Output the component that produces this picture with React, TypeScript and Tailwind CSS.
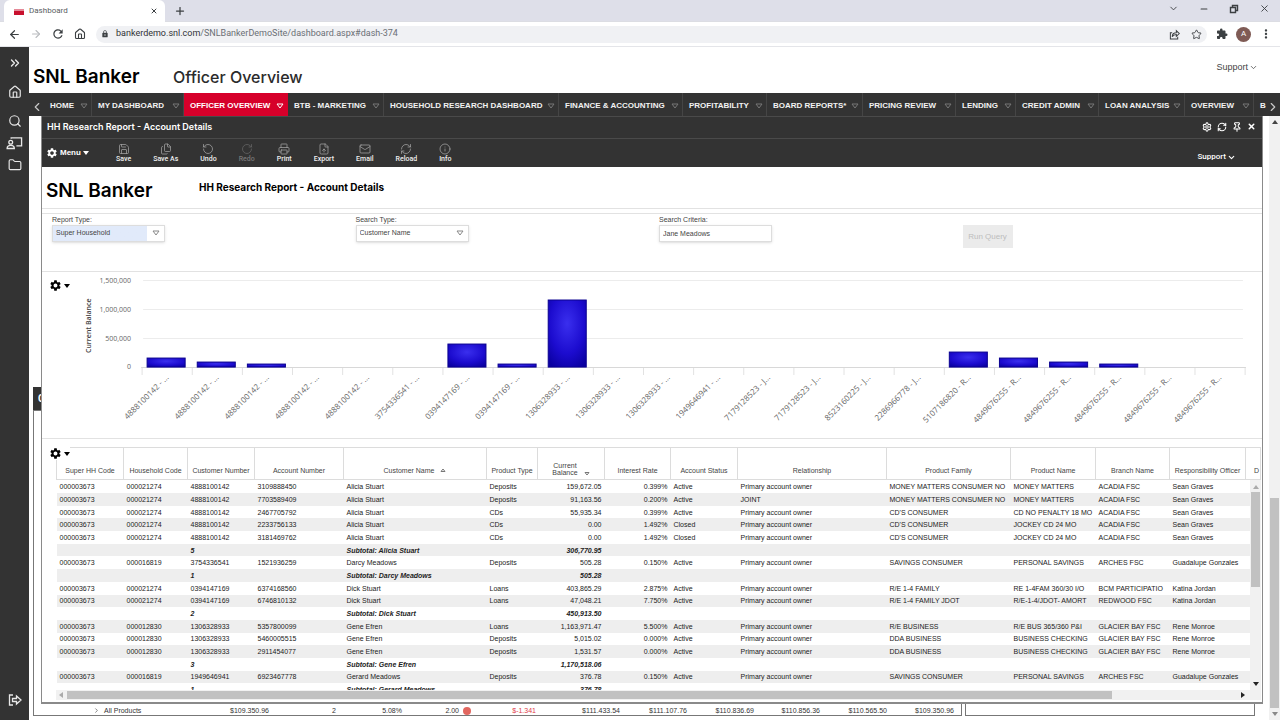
import React from "react";
import {
  ArrowLeft,
  ArrowRight,
  ChevronDown,
  ChevronLeft,
  ChevronRight,
  ChevronsRight,
  FileUp,
  Files,
  Folder,
  House,
  Info,
  Mail,
  Minus,
  Pin,
  Plus,
  Printer,
  RefreshCw,
  RotateCcw,
  RotateCw,
  Save,
  Search,
  Settings,
  Star,
  X,
} from "lucide-react";
import { MdExtension, MdLock, MdMoreVert, MdSettings, MdRefresh } from "react-icons/md";

const navItems = [
  { label: "HOME", width: "w-[48px]" },
  { label: "MY DASHBOARD", width: "w-[92px]" },
  { label: "OFFICER OVERVIEW", width: "w-[104px]", active: true },
  { label: "BTB - MARKETING", width: "w-[96px]" },
  { label: "HOUSEHOLD RESEARCH DASHBOARD", width: "w-[175px]" },
  { label: "FINANCE & ACCOUNTING", width: "w-[124px]" },
  { label: "PROFITABILITY", width: "w-[84px]" },
  { label: "BOARD REPORTS*", width: "w-[96px]" },
  { label: "PRICING REVIEW", width: "w-[93px]" },
  { label: "LENDING", width: "w-[60px]" },
  { label: "CREDIT ADMIN", width: "w-[83px]" },
  { label: "LOAN ANALYSIS", width: "w-[86px]" },
  { label: "OVERVIEW", width: "w-[69px]" },
];

const tools = [
  { label: "Save", Icon: Save },
  { label: "Save As", Icon: Files },
  { label: "Undo", Icon: RotateCcw },
  { label: "Redo", Icon: RotateCw, disabled: true },
  { label: "Print", Icon: Printer },
  { label: "Export", Icon: FileUp },
  { label: "Email", Icon: Mail },
  { label: "Reload", Icon: RefreshCw },
  { label: "Info", Icon: Info },
];

const bars: [string, number][] = [
  ["4888100142 - ...", 159672],
  ["4888100142 - ...", 91163],
  ["4888100142 - ...", 55935],
  ["4888100142 - ...", 0],
  ["4888100142 - ...", 0],
  ["3754336541 - ...", 0],
  ["0394147169 - ...", 403865],
  ["0394147169 - ...", 47048],
  ["1306328933 - ...", 1163971],
  ["1306328933 - ...", 0],
  ["1306328933 - ...", 0],
  ["1949646941 - ...", 0],
  ["7179128523 - J...", 0],
  ["7179128523 - J...", 0],
  ["8523160225 - J...", 0],
  ["2286966778 - J...", 0],
  ["5107186820 - R...", 257000],
  ["4849676255 - R...", 159672],
  ["4849676255 - R...", 91163],
  ["4849676255 - R...", 55935],
  ["4849676255 - R...", 0],
  ["4849676255 - R...", 0],
];

const columns = [
  { label: "Super HH Code", width: "w-[67px]" },
  { label: "Household Code", width: "w-[64px]" },
  { label: "Customer Number", width: "w-[67px]" },
  { label: "Account Number", width: "w-[89px]" },
  { label: "Customer Name", width: "w-[143px]", sort: "asc" },
  { label: "Product Type", width: "w-[51px]" },
  { label: "Current Balance", width: "w-[67px]", sort: "desc" },
  { label: "Interest Rate", width: "w-[66px]" },
  { label: "Account Status", width: "w-[67px]" },
  { label: "Relationship", width: "w-[149px]" },
  { label: "Product Family", width: "w-[124px]" },
  { label: "Product Name", width: "w-[85px]" },
  { label: "Branch Name", width: "w-[74px]" },
  { label: "Responsibility Officer", width: "w-[76px]" },
  { label: "D", width: "w-[15px]" },
];

const P = "Primary account owner";
const rows: string[][] = [
  ["000003673", "000021274", "4888100142", "3109888450", "Alicia Stuart", "Deposits", "159,672.05", "0.399%", "Active", P, "MONEY MATTERS CONSUMER NO", "MONEY MATTERS", "ACADIA FSC", "Sean Graves"],
  ["000003673", "000021274", "4888100142", "7703589409", "Alicia Stuart", "Deposits", "91,163.56", "0.200%", "Active", "JOINT", "MONEY MATTERS CONSUMER NO", "MONEY MATTERS", "ACADIA FSC", "Sean Graves"],
  ["000003673", "000021274", "4888100142", "2467705792", "Alicia Stuart", "CDs", "55,935.34", "0.399%", "Active", P, "CD'S CONSUMER", "CD NO PENALTY 18 MO", "ACADIA FSC", "Sean Graves"],
  ["000003673", "000021274", "4888100142", "2233756133", "Alicia Stuart", "CDs", "0.00", "1.492%", "Closed", P, "CD'S CONSUMER", "JOCKEY CD 24 MO", "ACADIA FSC", "Sean Graves"],
  ["000003673", "000021274", "4888100142", "3181469762", "Alicia Stuart", "CDs", "0.00", "1.492%", "Closed", P, "CD'S CONSUMER", "JOCKEY CD 24 MO", "ACADIA FSC", "Sean Graves"],
  ["", "", "5", "", "Subtotal: Alicia Stuart", "", "306,770.95", "", "", "", "", "", "", ""],
  ["000003673", "000016819", "3754336541", "1521936259", "Darcy Meadows", "Deposits", "505.28", "0.150%", "Active", P, "SAVINGS CONSUMER", "PERSONAL SAVINGS", "ARCHES FSC", "Guadalupe Gonzales"],
  ["", "", "1", "", "Subtotal: Darcy Meadows", "", "505.28", "", "", "", "", "", "", ""],
  ["000003673", "000021274", "0394147169", "6374168560", "Dick Stuart", "Loans", "403,865.29", "2.875%", "Active", P, "R/E 1-4 FAMILY", "RE 1-4FAM 360/30 I/O", "BCM PARTICIPATIO", "Katina Jordan"],
  ["000003673", "000021274", "0394147169", "6746810132", "Dick Stuart", "Loans", "47,048.21", "7.750%", "Active", P, "R/E 1-4 FAMILY JDOT", "R/E-1-4/JDOT- AMORT", "REDWOOD FSC", "Katina Jordan"],
  ["", "", "2", "", "Subtotal: Dick Stuart", "", "450,913.50", "", "", "", "", "", "", ""],
  ["000003673", "000012830", "1306328933", "5357800099", "Gene Efren", "Loans", "1,163,971.47", "5.500%", "Active", P, "R/E BUSINESS", "R/E BUS 365/360 P&I", "GLACIER BAY FSC", "Rene Monroe"],
  ["000003673", "000012830", "1306328933", "5460005515", "Gene Efren", "Deposits", "5,015.02", "0.000%", "Active", P, "DDA BUSINESS", "BUSINESS CHECKING", "GLACIER BAY FSC", "Rene Monroe"],
  ["000003673", "000012830", "1306328933", "2911454077", "Gene Efren", "Deposits", "1,531.57", "0.000%", "Active", P, "DDA BUSINESS", "BUSINESS CHECKING", "GLACIER BAY FSC", "Rene Monroe"],
  ["", "", "3", "", "Subtotal: Gene Efren", "", "1,170,518.06", "", "", "", "", "", "", ""],
  ["000003673", "000016819", "1949646941", "6923467778", "Gerard Meadows", "Deposits", "376.78", "0.150%", "Active", P, "SAVINGS CONSUMER", "PERSONAL SAVINGS", "ARCHES FSC", "Guadalupe Gonzales"],
  ["", "", "1", "", "Subtotal: Gerard Meadows", "", "376.78", "", "", "", "", "", "", ""],
];

function Caret({ className = "" }: { className?: string }) {
  return (
    <svg viewBox="0 0 8 6" className={`h-[6px] w-[8px] shrink-0 ${className}`} fill="none" stroke="currentColor" aria-hidden="true">
      <path d="M1 1h6L4 5z" />
    </svg>
  );
}

function Solid({ dir = "down", className = "" }: { dir?: "down" | "up" | "left" | "right"; className?: string }) {
  const d = {
    down: "M0 1h6L3 5z",
    up: "M0 5h6L3 1z",
    left: "M5 0v6L1 3z",
    right: "M1 0v6l4-3z",
  }[dir];
  return (
    <svg viewBox="0 0 6 6" className={`size-[6px] shrink-0 ${className}`} fill="currentColor" aria-hidden="true">
      <path d={d} />
    </svg>
  );
}

function SortMark({ dir }: { dir: string }) {
  return (
    <svg viewBox="0 0 6 5" className="h-[5px] w-[6px] shrink-0" fill="none" stroke="#777" strokeWidth="1" aria-hidden="true">
      <path d={dir === "asc" ? "M1 3.500h4L3 1z" : "M1 1.500h4L3 4z"} />
    </svg>
  );
}

function BrowserChrome() {
  return (
    <header className="shrink-0 text-[#3c4043]">
      <div className="flex h-[22px] items-center border-b border-[#dcdde3] bg-[#dedfe9] pl-1">
        <div className="flex h-[22px] w-[161px] items-center rounded-t-md bg-white pr-[7px] pl-[10px]">
          <svg viewBox="0 0 10 8" className="h-[8px] w-[10px]" aria-hidden="true">
            <path d="M0 2h10v6H0z" fill="#c8102e" />
            <path d="M0 2h10v2H0z" fill="#e58a98" />
          </svg>
          <span className="ml-[5px] flex-1 font-['Roboto',sans-serif] text-[8px] text-[#5a5d61]">Dashboard</span>
          <button type="button" aria-label="Close tab"><X size={8} strokeWidth={3} /></button>
        </div>
        <button type="button" aria-label="New tab" className="ml-[9px]"><Plus size={12} strokeWidth={2.5} /></button>
        <div className="ml-auto flex items-center gap-[20px] pr-[10px] pb-1">
          <button type="button" aria-label="Search tabs"><ChevronDown size={11} /></button>
          <button type="button" aria-label="Minimize"><Minus size={10} strokeWidth={2.5} /></button>
          <button type="button" aria-label="Restore">
            <svg viewBox="0 0 10 10" className="size-[10px]" fill="none" stroke="currentColor" strokeWidth="1.4" aria-hidden="true">
              <path d="M1.5 3.5h5v5h-5zM3.5 3.5v-2h5v5h-2" />
            </svg>
          </button>
          <button type="button" aria-label="Close window"><X size={11} strokeWidth={2} /></button>
        </div>
      </div>
      <div className="flex h-[25px] items-center border-b border-[#e4e5e9] bg-white pr-[7px] pl-[8px]">
        <nav className="flex w-[88px] items-center gap-[9px]" aria-label="Browser">
          <button type="button" aria-label="Back"><ArrowLeft size={13} strokeWidth={2.2} /></button>
          <button type="button" aria-label="Forward" className="text-[#babcc0]"><ArrowRight size={12} strokeWidth={2.2} /></button>
          <button type="button" aria-label="Reload page"><MdRefresh size={14} /></button>
          <button type="button" aria-label="Home page"><House size={12} strokeWidth={2.2} /></button>
        </nav>
        <div className="flex h-[17px] flex-1 items-center rounded-full bg-[#f0f1f4] pr-[5px] pl-[5px]">
          <MdLock size={8} />
          <span className="ml-[7px] flex-1 font-['Roboto',sans-serif] text-[9px] text-[#6b6f74]">
            <span className="text-[#303236]">bankerdemo.snl.com</span>/SNLBankerDemoSite/dashboard.aspx#dash-374
          </span>
          <svg viewBox="0 0 12 12" className="mr-[11px] size-[11px]" fill="none" stroke="currentColor" strokeWidth="1.1" aria-hidden="true">
            <path d="M3.500 4H1.500v7h8V8.500" />
            <path d="M3.500 8.500c0-3 1.600-4.500 4.500-4.500V1.800L11.200 5 8 8V6C6 6 4.500 6.600 3.500 8.500z" />
          </svg>
          <Star size={11} />
        </div>
        <MdExtension size={12} className="ml-[9px]" />
        <span className="mr-[8px] ml-[8px] flex size-[15px] items-center justify-center rounded-full bg-[#7f5b55] font-['Roboto',sans-serif] text-[8px] text-white">A</span>
        <MdMoreVert size={14} />
      </div>
    </header>
  );
}

function Sidebar() {
  return (
    <aside className="flex w-[29px] shrink-0 flex-col items-center bg-[#333] pt-[9px] text-[#e8e8e8]">
      <button type="button" aria-label="Expand" className="mb-[15px]"><ChevronsRight size={14} strokeWidth={2.4} /></button>
      <button type="button" aria-label="Home" className="mb-[15px]"><House size={14} strokeWidth={2} /></button>
      <button type="button" aria-label="Search" className="mb-[8px]"><Search size={14} strokeWidth={2} /></button>
      <button type="button" aria-label="Presentations" className="mb-[8px]">
        <svg viewBox="0 0 18 14" className="h-[14px] w-[17px]" fill="none" stroke="currentColor" strokeWidth="1.4" aria-hidden="true">
          <path d="M5.500 2.500v-1h11v8.500h-5.500" />
          <circle cx="5" cy="6.200" r="2" />
          <path d="M1.200 12.800c0-2.200 1.200-3.300 3.800-3.300s3.800 1.100 3.800 3.300z" />
        </svg>
      </button>
      <button type="button" aria-label="Folders"><Folder size={14} strokeWidth={2} /></button>
      <button type="button" aria-label="Sign out" className="mt-auto mb-[13px]">
        <svg viewBox="0 0 14 14" className="size-[14px]" fill="none" stroke="currentColor" strokeWidth="1.3" aria-hidden="true">
          <path d="M5 2H1.500v10H5" />
          <path d="M4.500 5.500h4V3L13 7l-4.500 4V8.500h-4z" />
        </svg>
      </button>
    </aside>
  );
}

function MainNav() {
  return (
    <nav className="flex h-[23px] shrink-0 items-stretch overflow-hidden bg-[#333] font-['Liberation_Sans',Arial,sans-serif] text-[8px] font-bold text-[#f2f2f2]">
      <button type="button" aria-label="Scroll left" className="flex w-[15px] shrink-0 items-center justify-center pt-[4px] text-[#c8c8c8]"><ChevronLeft size={14} /></button>
      {navItems.map((item) => (
        <a
          key={item.label}
          href="#"
          className={`flex shrink-0 items-center justify-between border-r pt-[2px] pr-[3px] pl-[6px] whitespace-nowrap ${item.width} ${item.active ? "border-[#d6002a] bg-[#d6002a] text-white" : "border-[#454545]"}`}
        >
          {item.label}
          <Caret className={item.active ? "text-white" : "text-[#777]"} />
        </a>
      ))}
      <a href="#" className="flex flex-1 items-center pt-[2px] pl-[6px]">B</a>
      <button type="button" aria-label="Scroll right" className="flex w-[14px] items-center justify-center pt-[4px] text-[#c8c8c8]"><ChevronRight size={14} /></button>
    </nav>
  );
}

function BackgroundDashboard() {
  const cells = ["$109.350.96", "2", "5.08%", "2.00", "$-1.341", "$111.433.54", "$111.107.76", "$110.836.69", "$110.856.36", "$110.565.50", "$109.350.96"];
  return (
    <div className="flex h-full flex-col pr-[14px] pb-[4px] pl-[4px] font-['Liberation_Sans',Arial,sans-serif] text-[7px] text-[#333]">
      <div className="h-[271px] shrink-0" />
      <div className="flex h-[23px] shrink-0 items-center bg-[#333] pl-[5px] font-['Roboto',sans-serif] text-[10px] font-bold text-white">C</div>
      <div className="flex flex-1 gap-[3px]">
        <section className="flex w-[929px] flex-col justify-end border border-[#777]">
          <table className="w-full table-fixed border-collapse">
            <colgroup>
              <col className="w-[176px]" />
              <col className="w-[67px]" />
              <col className="w-[67px]" />
              <col className="w-[66px]" />
              <col className="w-[67px]" />
              <col className="w-[67px]" />
              <col className="w-[84px]" />
              <col className="w-[67px]" />
              <col className="w-[67px]" />
              <col className="w-[66px]" />
              <col className="w-[67px]" />
              <col className="w-[67px]" />
            </colgroup>
            <tbody>
              <tr className="leading-[9px]">
                <th scope="row" className="p-0 pl-[59px] text-left font-normal">
                  <span className="flex items-center gap-[4px]"><ChevronRight size={7} />All Products</span>
                </th>
                {cells.map((c, i) => (
                  <td key={i} className={`p-0 pr-[8px] ${i === 4 ? "text-[#e0404a]" : ""}`}>
                    <span className="flex items-center justify-end gap-[4px]">
                      {c}
                      {i === 3 && <span className="-mr-[2px] size-[8px] rounded-full bg-[#e2675f]" />}
                    </span>
                  </td>
                ))}
              </tr>
            </tbody>
          </table>
        </section>
        <section className="flex-1 border border-[#777]" />
      </div>
    </div>
  );
}

function BalanceChart() {
  const base = 95;
  const scale = 86 / 1500000;
  const pitch = 50.1;
  return (
    <svg viewBox="0 0 1188 166" className="block min-w-0 flex-1" role="img" aria-label="Current Balance by account">
      <defs>
        <radialGradient id="bar" cx="50%" cy="35%" r="75%">
          <stop offset="0" stopColor="#3a2fee" />
          <stop offset="0.6" stopColor="#1c0ccf" />
          <stop offset="1" stopColor="#0a00a0" />
        </radialGradient>
      </defs>
      <g stroke="#ececec">
        {[0, 1, 2].map((i) => (
          <line key={i} x1="70" x2="1169" y1={8.5 + i * 29} y2={8.5 + i * 29} />
        ))}
        <line x1="68" x2="1172" y1="95.500" y2="95.500" stroke="#d8d8d8" />
        {Array.from({ length: 23 }, (_, i) => (
          <line key={i} x1={69 + i * pitch} x2={69 + i * pitch} y1="96" y2="103" stroke="#e2e2e2" />
        ))}
      </g>
      <g fontFamily="'Open Sans', sans-serif" fontSize="7" fill="#666" textAnchor="end">
        <text x="58" y="11">1,500,000</text>
        <text x="58" y="40">1,000,000</text>
        <text x="58" y="69">500,000</text>
        <text x="58" y="97">0</text>
        <g fontSize="8">
          {bars.map(([label], i) => (
            <text key={i} transform={`translate(${96 + i * pitch} 106) rotate(-45)`}>{label}</text>
          ))}
        </g>
      </g>
      <text transform="translate(18 81) rotate(-90)" fontFamily="'Open Sans', sans-serif" fontSize="7" fontWeight="600" fill="#444">Current Balance</text>
      {bars.map(([, v], i) => {
        const h = Math.round(v * scale);
        return h > 0 ? <rect key={i} x={74 + i * pitch} y={base - h} width="38" height={h} fill="url(#bar)" stroke="#0a0090" strokeWidth="1" /> : null;
      })}
    </svg>
  );
}

function GearMenu({ label }: { label: string }) {
  return (
    <button type="button" aria-label={label} className="flex items-center gap-[2px] text-black">
      <MdSettings size={13} />
      <Solid />
    </button>
  );
}

function ReportTable() {
  return (
    <table className="h-[249px] w-full table-fixed border-collapse text-[#222]">
      <colgroup>
        {columns.map((c) => (
          <col key={c.label} className={c.width} />
        ))}
      </colgroup>
      <thead>
        <tr className="h-[32px]">
          {columns.map((c) => (
            <th key={c.label} scope="col" className={`overflow-hidden border border-[#dcdcdc] p-0 pb-[3px] align-bottom font-normal whitespace-nowrap text-[#444] ${c.label === "D" ? "pl-[8px] text-left" : "text-center"}`}>
              {c.label === "Current Balance" ? (
                <span className="inline-flex items-end gap-[6px] leading-[7px]">
                  <span>Current<br />Balance</span>
                  <SortMark dir="desc" />
                </span>
              ) : c.sort ? (
                <span className="inline-flex items-center gap-[6px]">
                  {c.label}
                  <SortMark dir="asc" />
                </span>
              ) : (
                c.label
              )}
            </th>
          ))}
        </tr>
      </thead>
      <tbody>
        {rows.map((r, i) => (
          <tr key={i} className={`${i % 2 ? "bg-[#eeeeee]" : "bg-white"} ${r[0] ? "" : "font-bold italic"}`}>
            {r.map((cell, j) => (
              <td key={j} className={`overflow-hidden px-[3px] py-0 leading-[9px] whitespace-nowrap ${j === 6 || j === 7 ? "text-right" : ""}`}>
                {cell}
              </td>
            ))}
            <td className="p-0" />
          </tr>
        ))}
      </tbody>
    </table>
  );
}

function ReportWindow() {
  return (
    <section className="absolute top-0 right-[6px] bottom-[16px] left-[12px] flex flex-col overflow-hidden border border-t-0 border-b-2 border-[#8a8a8a] bg-white font-['Liberation_Sans',Arial,sans-serif] text-[7px]">
      <div className="flex h-[23px] shrink-0 items-center justify-between border-y border-[#4a4a4a] bg-[#333] pr-[6px] pb-[2px] pl-[5px] text-white">
        <h2 className="font-['Inter',sans-serif] text-[9px] font-semibold">HH Research Report - Account Details</h2>
        <div className="flex items-center gap-[5px]">
          <button type="button" aria-label="Settings"><Settings size={10} strokeWidth={2.5} /></button>
          <button type="button" aria-label="Refresh"><RefreshCw size={10} strokeWidth={2.5} /></button>
          <button type="button" aria-label="Pin"><Pin size={10} strokeWidth={2.5} /></button>
          <button type="button" aria-label="Close"><X size={9} strokeWidth={4} /></button>
        </div>
      </div>
      <div className="flex h-[28px] shrink-0 items-center bg-[#333] pr-[26px] pl-[4px] text-white">
        <button type="button" className="flex w-[70px] items-center gap-[2px] text-[8px] font-bold">
          <MdSettings size={12} />
          Menu
          <Solid />
        </button>
        <div className="flex gap-[22px]">
          {tools.map(({ label, Icon, disabled }) => (
            <button key={label} type="button" disabled={disabled} className={`flex flex-col items-center font-['Roboto',sans-serif] font-medium ${disabled ? "text-[#777]" : "text-[#f0f0f0]"}`}>
              <Icon size={12} strokeWidth={1.5} className={disabled ? "text-[#666]" : "text-[#a4a4a4]"} />
              <span className="leading-[8px]">{label}</span>
            </button>
          ))}
        </div>
        <button type="button" className="mt-[8px] ml-auto flex items-center gap-px font-['Roboto',sans-serif] text-[8px] font-medium">
          Support
          <ChevronDown size={9} strokeWidth={3} />
        </button>
      </div>

      <div className="flex h-[42px] shrink-0 border-b border-[#e2e2e2] pl-[4px] text-black">
        <div className="flex w-[153px] items-center pt-[7px] font-['Inter',sans-serif] text-[19px] font-semibold">SNL Banker</div>
        <h3 className="pt-[13px] font-['Inter',sans-serif] text-[10px] leading-[14px] font-bold">HH Research Report - Account Details</h3>
      </div>

      <form className="mt-[4px] grid h-[59px] shrink-0 grid-cols-4 gap-x-[4px] border-y border-[#e2e2e2] pt-px pl-[10px] text-[#444]">
        <div>
          <label htmlFor="report-type" className="block leading-[10px]">Report Type:</label>
          <div className="relative w-[113px]">
            <select id="report-type" className="block h-[17px] w-full appearance-none border border-[#ddd] bg-gradient-to-r from-[#e1eafa] from-85% to-white to-85% px-[3px] text-[7px] shadow-sm">
              <option>Super Household</option>
            </select>
            <Caret className="pointer-events-none absolute top-[5px] right-[5px] text-[#888]" />
          </div>
        </div>
        <div>
          <label htmlFor="search-type" className="block leading-[10px]">Search Type:</label>
          <div className="relative w-[113px]">
            <select id="search-type" className="block h-[17px] w-full appearance-none border border-[#ddd] bg-white px-[3px] text-[7px] shadow-sm">
              <option>Customer Name</option>
            </select>
            <Caret className="pointer-events-none absolute top-[5px] right-[5px] text-[#888]" />
          </div>
        </div>
        <div>
          <label htmlFor="criteria" className="block leading-[10px]">Search Criteria:</label>
          <input id="criteria" defaultValue="Jane Meadows" className="block h-[17px] w-[113px] border border-[#ddd] px-[3px] text-[7px] shadow-sm" />
        </div>
        <div className="pt-[10px]">
          <button type="button" disabled className="h-[23px] w-[50px] bg-[#ebebeb] text-[8px] text-[#bdbdbd]">Run Query</button>
        </div>
      </form>

      <div className="flex shrink-0 items-start border-b border-[#e2e2e2] pl-[7px]">
        <div className="w-[24px] pt-[7px]"><GearMenu label="Chart options" /></div>
        <BalanceChart />
      </div>

      <div className="relative mt-[8px] min-h-0 flex-1">
        <div className="absolute top-0 left-[7px] z-10 bg-white"><GearMenu label="Grid options" /></div>
        <div className="flex h-full flex-col pr-px pl-[14px]">
          <div className="relative min-h-0 flex-1 overflow-hidden">
            <ReportTable />
            <div className="absolute top-[33px] right-0 bottom-0 flex w-[11px] flex-col items-center bg-[#f1f1f1] pt-[4px] pb-[3px]">
              <Solid dir="up" className="text-[#aaa]" />
              <div className="mt-[2px] h-[95px] w-[9px] bg-[#c1c1c1]" />
              <Solid className="mt-auto text-[#222]" />
            </div>
          </div>
          <div className="mb-[2px] flex h-[10px] shrink-0 items-center bg-[#f1f1f1] pr-[15px] pl-[2px]">
            <Solid dir="left" className="text-[#aaa]" />
            <div className="ml-[3px] h-[8px] w-[88%] bg-[#c1c1c1]" />
            <Solid dir="right" className="ml-auto text-[#222]" />
          </div>
        </div>
      </div>
    </section>
  );
}

export default function App() {
  return (
    <div className="flex h-screen flex-col overflow-hidden bg-white">
      <BrowserChrome />
      <div className="flex min-h-0 flex-1">
        <Sidebar />
        <main className="flex min-w-0 flex-1 flex-col">
          <div className="flex h-[46px] shrink-0 pr-[22px] pl-[4px]">
            <div className="flex w-[140px] items-center pt-[14px] font-['Inter',sans-serif] text-[19px] font-semibold text-black">SNL Banker</div>
            <h1 className="flex items-center pt-[14px] font-['Inter',sans-serif] text-[16px] font-medium text-[#2b2b2b]">Officer Overview</h1>
            <button type="button" className="ml-auto flex items-center gap-px pb-[5px] font-['Liberation_Sans',Arial,sans-serif] text-[9px] text-[#444]">
              Support
              <ChevronDown size={9} />
            </button>
          </div>
          <MainNav />
          <div className="flex min-h-0 flex-1">
            <div className="relative min-w-0 flex-1">
              <BackgroundDashboard />
              <ReportWindow />
            </div>
            <div className="flex w-[11px] shrink-0 flex-col items-center bg-[#f1f1f1] pt-[3px] pb-[3px]">
              <Solid dir="up" className="text-[#444]" />
              <div className="mt-auto h-[210px] w-[9px] bg-[#c1c1c1]" />
              <Solid className="mt-[3px] text-[#888]" />
            </div>
          </div>
        </main>
      </div>
    </div>
  );
}
